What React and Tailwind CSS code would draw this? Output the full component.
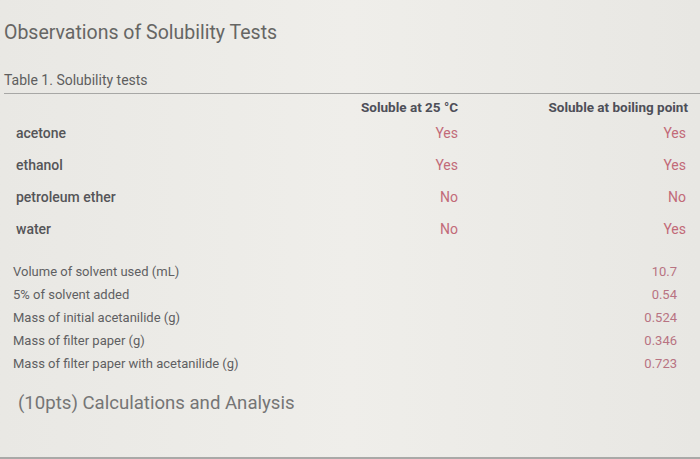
const ROWS = [
  { name: 'acetone', cold: 'Yes', hot: 'Yes' },
  { name: 'ethanol', cold: 'Yes', hot: 'Yes' },
  { name: 'petroleum ether', cold: 'No', hot: 'No' },
  { name: 'water', cold: 'No', hot: 'Yes' },
]

const MEASURES = [
  { label: 'Volume of solvent used (mL)', value: '10.7' },
  { label: '5% of solvent added', value: '0.54' },
  { label: 'Mass of initial acetanilide (g)', value: '0.524' },
  { label: 'Mass of filter paper (g)', value: '0.346' },
  { label: 'Mass of filter paper with acetanilide (g)', value: '0.723' },
]

export default function App() {
  return (
    <div
      className="h-[459px] w-[700px] overflow-hidden bg-gradient-to-r from-[#e9e8e4] via-[#efeeea] to-[#e8e7e3] border-b-2 border-[#a9a9a7]"
      style={{ fontFamily: 'Roboto, "Noto Sans", sans-serif' }}
    >
      {/* Title */}
      <h1 className="pt-[21px] pl-[4px] text-[19.5px] leading-[24px] text-[#666664]">
        Observations of Solubility Tests
      </h1>

      {/* Table caption */}
      <div className="mt-[26px] ml-[4px] border-b border-[#a7a7a5] pb-[4px] text-[14px] leading-[18px] text-[#5e5e5e]">
        Table 1. Solubility tests
      </div>

      {/* Solubility table */}
      <div className="pt-[3px] pl-[16px] pr-[12px]">
        <div className="grid h-[20px] grid-cols-[1fr_200px_230px] items-center text-[13.5px] font-bold text-[#4e4f58]">
          <span />
          <span className="text-right">Soluble at 25 °C</span>
          <span className="text-right">Soluble at boiling point</span>
        </div>
        {ROWS.map((row) => (
          <div
            key={row.name}
            className="grid h-[32px] grid-cols-[1fr_200px_230px] items-center text-[14px]"
          >
            <span className="font-medium text-[#555558]">{row.name}</span>
            <span className="text-right text-[#c26a78]">{row.cold}</span>
            <span className="pr-[2px] text-right text-[#c26a78]">{row.hot}</span>
          </div>
        ))}
      </div>

      {/* Measurements */}
      <div className="mt-[15px] pl-[13px] pr-[23px]">
        {MEASURES.map((m) => (
          <div key={m.label} className="flex h-[23px] items-center justify-between text-[13px]">
            <span className="text-[#5f5f62]">{m.label}</span>
            <span className="text-[#b87382]">{m.value}</span>
          </div>
        ))}
      </div>

      <h2 className="mt-[16px] pl-[18px] text-[18.6px] leading-[24px] text-[#757575]">
        (10pts) Calculations and Analysis
      </h2>
    </div>
  )
}
